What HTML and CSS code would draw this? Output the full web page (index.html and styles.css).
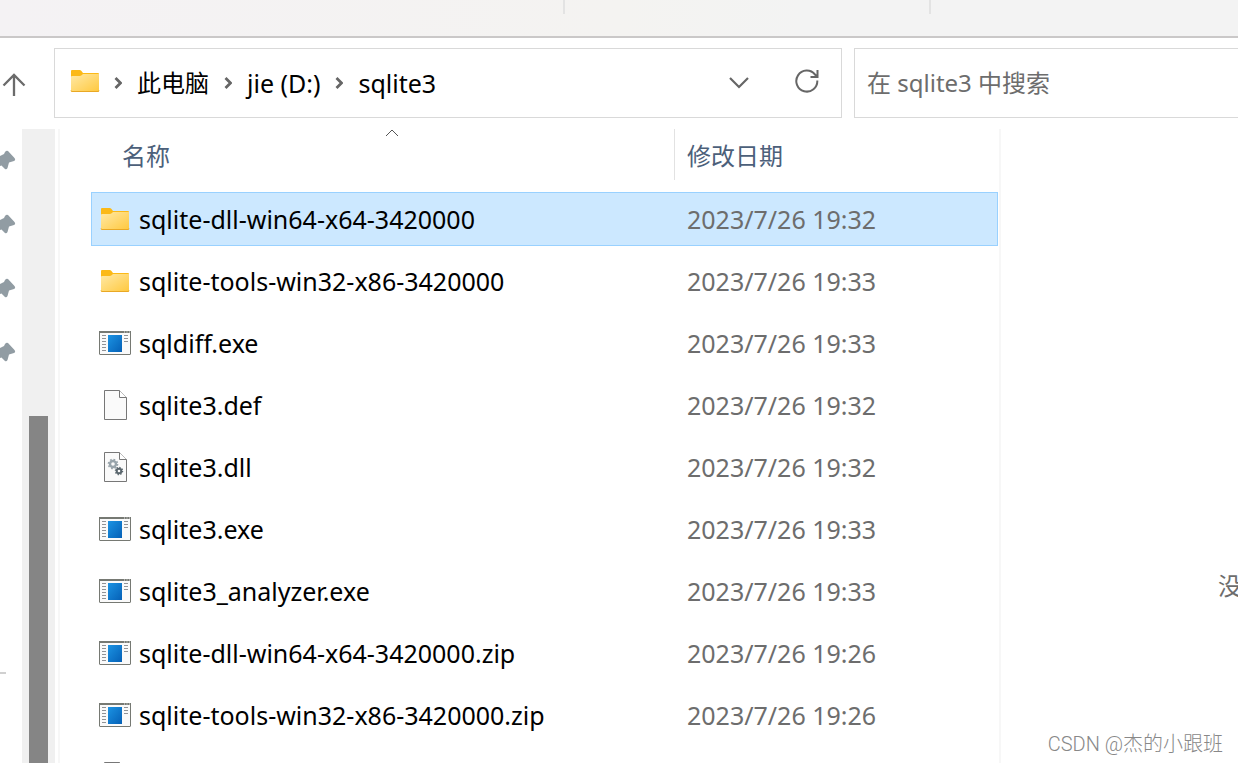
FILE: index.html
```
<!DOCTYPE html>
<html lang="zh-CN">
<head>
    <meta charset="UTF-8">
    <meta name="viewport" content="width=device-width, initial-scale=1.0">
    <title>sqlite3</title>
    <link rel="stylesheet" href="styles.css">
</head>
<body>
    <!-- icons -->
    <svg class="defs" width="0" height="0">
        <defs>
            <linearGradient id="gFolder" x1="0" y1="0" x2="1" y2="1">
                <stop offset="0" stop-color="#ffe9a6"></stop>
                <stop offset="1" stop-color="#ffc83d"></stop>
            </linearGradient>
            <linearGradient id="gExe" x1="0" y1="0" x2="1" y2="1">
                <stop offset="0" stop-color="#1c93e3"></stop>
                <stop offset="1" stop-color="#0560b6"></stop>
            </linearGradient>
            <symbol id="folder" viewBox="0 0 32 32">
                <path d="M2 6Q2 5 3 5H11Q12 5 14 8H29Q30 8 30 9V14H2Z" fill="#fbb917"></path>
                <path d="M2 12Q2 11 3 11H11Q12 11 14 9H30V26Q30 27 29 27H3Q2 27 2 26Z" fill="url(#gFolder)"></path>
                <path d="M2 25.5Q2 26.5 3 26.5H29Q30 26.5 30 25.5" fill="none" stroke="#e9a825"></path>
            </symbol>
            <symbol id="exe" viewBox="0 0 32 32">
                <rect x="0.5" y="4.5" width="31" height="23" rx="0.5" fill="#fafafa" stroke="#767973"></rect>
                <path d="M0 4H32V6H0Z" fill="#767973"></path>
                <path d="M25 5H26M27.5 5H28.5M30 5H31" stroke="#e8e8e8"></path>
                <rect x="9" y="8" width="14" height="17" fill="url(#gExe)"></rect>
                <path d="M3 8.5H7M3 11.5H7M3 14.5H7M3 17.5H7M3 20.5H7M3 23.5H7M25 8.5H29M25 11.5H29M25 14.5H29" stroke="#919397"></path>
            </symbol>
            <symbol id="file" viewBox="0 0 32 32">
                <path d="M5.5 1.5H20.5L27.5 8.5V30.5H5.5Z" fill="#fafafa" stroke="#777"></path>
                <path d="M20.5 1.5V8.5H27.5" fill="#fff" stroke="#777"></path>
            </symbol>
            <symbol id="dll" viewBox="0 0 32 32">
                <use href="#file"></use>
                <circle cx="14" cy="13" r="3" fill="none" stroke="#98a4ab" stroke-width="2.4"></circle>
                <circle cx="14" cy="13" r="4.6" fill="none" stroke="#98a4ab" stroke-width="1.5" stroke-dasharray="1.8 1.8"></circle>
                <circle cx="20" cy="20" r="2.3" fill="none" stroke="#5a666d" stroke-width="2"></circle>
                <circle cx="20" cy="20" r="3.6" fill="none" stroke="#5a666d" stroke-width="1.3" stroke-dasharray="1.4 1.4"></circle>
            </symbol>
            <symbol id="pin" viewBox="0 0 16 20">
                <path d="M0 6L4 4L5 2Q6.500 0 8 1L14.500 8Q16 10 14 11L9 12.500L7.500 18Q6.500 20 5 19L1.500 15.500L0 16Z" fill="#919ca3"></path>
            </symbol>
            <symbol id="right" viewBox="0 0 8 12">
                <path d="M1.500 1L6.500 6L1.500 11" fill="none" stroke="#666" stroke-width="2.800"></path>
            </symbol>
        </defs>
    </svg>

    <div class="wrapper">
        <div class="ribbon">
            <div class="group"></div>
            <div class="group second"></div>
        </div>

        <div class="toolbar">
            <button type="button" class="up" aria-label="上移">
                <svg width="24" height="24" viewBox="0 0 24 24"><path d="M12 23V2M1.500 12.500L12 2L22.500 12.500" fill="none" stroke="#6b6b6b" stroke-width="2.300"></path></svg>
            </button>
            <div class="address">
                <svg class="icon" width="32" height="32"><use href="#folder"></use></svg>
                <svg class="arrow" width="8" height="12"><use href="#right"></use></svg>
                <a href="#" class="cjk">此电脑</a>
                <svg class="arrow" width="8" height="12"><use href="#right"></use></svg>
                <a href="#">jie (D:)</a>
                <svg class="arrow" width="8" height="12"><use href="#right"></use></svg>
                <a href="#">sqlite3</a>
                <button type="button" class="history" aria-label="历史记录">
                    <svg width="20" height="12" viewBox="0 0 20 12"><path d="M1 1L10 10L19 1" fill="none" stroke="#666" stroke-width="2.200"></path></svg>
                </button>
                <button type="button" aria-label="刷新">
                    <svg width="24" height="24" viewBox="0 0 24 24"><path d="M22.300 11.500A10.500 10.500 0 1 1 20 5.500L22 7.500M22.500 1V8H15.500" fill="none" stroke="#666" stroke-width="2"></path></svg>
                </button>
            </div>
            <input type="search" class="search" placeholder="在 sqlite3 中搜索" aria-label="搜索">
        </div>

        <div class="main">
            <div class="nav">
                <ul>
                    <li><svg width="16" height="20"><use href="#pin"></use></svg></li>
                    <li><svg width="16" height="20"><use href="#pin"></use></svg></li>
                    <li><svg width="16" height="20"><use href="#pin"></use></svg></li>
                    <li><svg width="16" height="20"><use href="#pin"></use></svg></li>
                </ul>
                <div class="line"></div>
            </div>
            <div class="scrollbar"><div class="thumb"></div></div>

            <div class="list">
                <table>
                    <thead>
                        <tr>
                            <th class="name">
                                <button type="button">名称
                                    <svg class="sort" width="14" height="8" viewBox="0 0 14 8"><path d="M1 7L7 1L13 7" fill="none" stroke="#555"></path></svg>
                                </button>
                            </th>
                            <th class="date"><button type="button">修改日期</button></th>
                        </tr>
                    </thead>
                    <tbody>
                        <tr class="active">
                            <td><div class="item"><svg width="32" height="32"><use href="#folder"></use></svg>sqlite-dll-win64-x64-3420000</div></td>
                            <td class="time">2023/7/26 19:32</td>
                        </tr>
                        <tr>
                            <td><div class="item"><svg width="32" height="32"><use href="#folder"></use></svg>sqlite-tools-win32-x86-3420000</div></td>
                            <td class="time">2023/7/26 19:33</td>
                        </tr>
                        <tr>
                            <td><div class="item"><svg width="32" height="32"><use href="#exe"></use></svg>sqldiff.exe</div></td>
                            <td class="time">2023/7/26 19:33</td>
                        </tr>
                        <tr>
                            <td><div class="item"><svg width="32" height="32"><use href="#file"></use></svg>sqlite3.def</div></td>
                            <td class="time">2023/7/26 19:32</td>
                        </tr>
                        <tr>
                            <td><div class="item"><svg width="32" height="32"><use href="#dll"></use></svg>sqlite3.dll</div></td>
                            <td class="time">2023/7/26 19:32</td>
                        </tr>
                        <tr>
                            <td><div class="item"><svg width="32" height="32"><use href="#exe"></use></svg>sqlite3.exe</div></td>
                            <td class="time">2023/7/26 19:33</td>
                        </tr>
                        <tr>
                            <td><div class="item"><svg width="32" height="32"><use href="#exe"></use></svg>sqlite3_analyzer.exe</div></td>
                            <td class="time">2023/7/26 19:33</td>
                        </tr>
                        <tr>
                            <td><div class="item"><svg width="32" height="32"><use href="#exe"></use></svg>sqlite-dll-win64-x64-3420000.zip</div></td>
                            <td class="time">2023/7/26 19:26</td>
                        </tr>
                        <tr>
                            <td><div class="item"><svg width="32" height="32"><use href="#exe"></use></svg>sqlite-tools-win32-x86-3420000.zip</div></td>
                            <td class="time">2023/7/26 19:26</td>
                        </tr>
                        <tr>
                            <td><div class="item"><svg width="32" height="32"><use href="#file"></use></svg></div></td>
                            <td></td>
                        </tr>
                    </tbody>
                </table>
            </div>

            <div class="preview"><p>没</p></div>
        </div>
        <div class="mark">CSDN @杰的小跟班</div>
    </div>
</body>
</html>
```
FILE: styles.css
```
* {
    margin: 0;
    padding: 0;
    box-sizing: border-box;
    list-style: none;
}
body {
    font-family: "Noto Sans", "Noto Sans CJK SC", sans-serif;
    font-size: 25px;
    line-height: 34px;
    color: #000;
    background-color: #fff;
}
button {
    border: none;
    background: none;
    font: inherit;
    color: inherit;
    cursor: pointer;
}
a {
    color: inherit;
    text-decoration: none;
}
svg {
    display: block;
    flex: none;
}
.defs {
    position: absolute;
}
.wrapper {
    position: relative;
    display: flex;
    flex-direction: column;
    height: 100vh;
    overflow: hidden;
}

/* ribbon */
.ribbon {
    display: flex;
    flex: none;
    height: 38px;
    background: linear-gradient(90deg, #f4f2f4, #f4f3f1 50%, #f3f3f3 65%);
    border-bottom: 2px solid #cac8c8;
}
.ribbon .group {
    width: 565px;
    height: 14px;
    border-right: 2px solid #e3e3e3;
}
.ribbon .second {
    width: 366px;
}

/* address bar */
.toolbar {
    display: flex;
    flex: none;
    height: 91px;
    padding: 10px 0 11px 2px;
}
.toolbar .up {
    width: 24px;
    margin-right: 28px;
    padding-top: 4px;
}
.address {
    display: flex;
    flex: 750;
    align-items: center;
    border: 1px solid #d9d9d9;
    padding: 0 22px 0 14px;
}
.address .icon {
    margin-bottom: 4px;
}
.address .arrow {
    margin: 0 15px;
}
.address .icon + .arrow {
    margin-left: 13px;
}
.address .cjk {
    font-size: 24px;
}
.address .history {
    margin: 0 46px 0 auto;
}
.address button:last-child {
    padding-bottom: 4px;
}
.toolbar .search {
    flex: 359;
    min-width: 0;
    margin-left: 12px;
    padding: 0 12px;
    border: 1px solid #d9d9d9;
    border-right: none;
    outline: none;
    background: #fff;
    font: inherit;
    font-size: 24px;
    -webkit-appearance: none;
    appearance: none;
}
.search::placeholder {
    color: #6d6d6d;
}

/* panes */
.main {
    display: flex;
    flex: 1;
    min-height: 0;
}
.nav {
    flex: none;
    width: 22px;
    padding-top: 21px;
    overflow: hidden;
}
.nav li {
    height: 64px;
}
.nav .line {
    width: 6px;
    height: 2px;
    margin-top: 266px;
    background-color: #d0d0d0;
}
.scrollbar {
    flex: none;
    width: 33px;
    margin-right: 3px;
    padding: 287px 7px 0;
    background-color: #f0f0f0;
}
.scrollbar .thumb {
    height: 100%;
    background-color: #858585;
}
.list {
    flex: 907;
    min-width: 0;
    padding: 0 1px 0 31px;
    border-left: 2px solid #f7f7f7;
    border-right: 2px solid #f7f7f7;
}
.list table {
    width: 100%;
    margin-top: -8px;
    border-spacing: 0 8px;
    table-layout: fixed;
}
.list th {
    height: 55px;
    padding: 0 0 4px;
    color: #4c607a;
    font-size: 24px;
    font-weight: 400;
    text-align: left;
}
.list th.name {
    width: 583px;
    padding-left: 19px;
}
.list th button {
    position: relative;
    display: block;
    width: 100%;
    height: 51px;
    padding: 2px 12px 0;
    text-align: left;
}
.list th.date button {
    border-left: 1px solid #e2e2e2;
}
.list .sort {
    position: absolute;
    top: 0;
    left: 50%;
    margin-left: -7px;
}
.list td {
    height: 54px;
    border: 1px solid transparent;
    white-space: nowrap;
}
.list .active td {
    background-color: #cce8ff;
    border-color: #99d1ff;
}
.list td:first-child {
    border-right: none;
}
.list td:last-child {
    border-left: none;
}
.list .item {
    display: flex;
    align-items: center;
    gap: 8px;
    padding-left: 7px;
}
.list .time {
    padding-left: 13px;
    color: #6d6d6d;
}
.preview {
    flex: 237;
    min-width: 0;
    overflow: hidden;
}
.preview p {
    padding: 440px 0 0 217px;
    color: #6d6d6d;
    font-size: 24px;
    white-space: nowrap;
}

.mark {
    position: absolute;
    right: 15px;
    bottom: 2px;
    color: #888;
    font-family: Roboto, "Noto Sans CJK SC", sans-serif;
    font-size: 20px;
    font-weight: 300;
}
```
